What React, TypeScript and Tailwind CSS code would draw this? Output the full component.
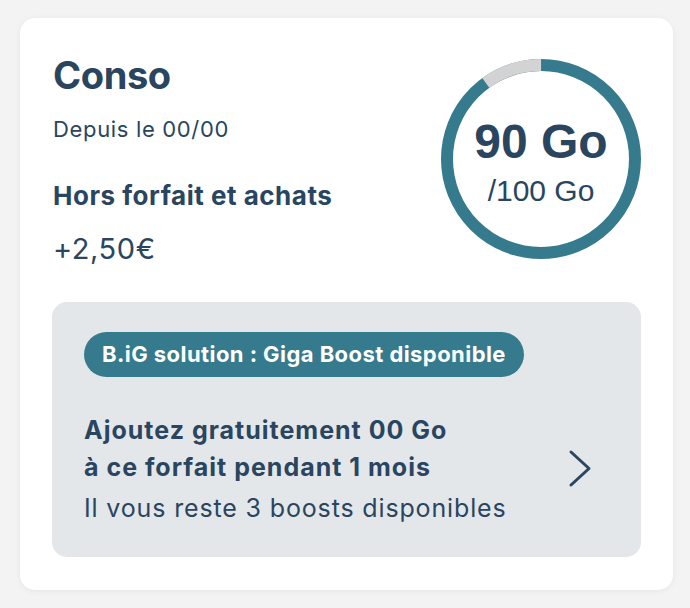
const NAVY = "text-[#2a4560]"

function UsageRing() {
  const r = 94
  const c = 2 * Math.PI * r
  const spent = 0.1 * c

  return (
    <div className="relative mt-[7px] h-[200px] w-[200px] shrink-0">
      <svg width="200" height="200" viewBox="0 0 200 200" className="absolute inset-0">
        <circle cx="100" cy="100" r={r} fill="none" stroke="#367a8e" strokeWidth="12" />
        <circle
          cx="100"
          cy="100"
          r={r}
          fill="none"
          stroke="#d3d3d3"
          strokeWidth="12"
          strokeDasharray={`${spent} ${c}`}
          transform="rotate(-126 100 100)"
        />
      </svg>
      <div
        className={`relative flex flex-col items-center pt-[59px] ${NAVY}`}
        style={{ fontFamily: '"Liberation Sans", Arial, sans-serif' }}>
        <span className="text-[48px] font-bold leading-[48px]">90 Go</span>
        <span className="mt-[10px] text-[30px] leading-[30px]">/100 Go</span>
      </div>
    </div>
  )
}

function Chevron() {
  return (
    <svg width="24" height="39" viewBox="0 0 24 39" className="shrink-0">
      <polyline
        points="3,3 21,19.5 3,36"
        fill="none"
        stroke="#2a4560"
        strokeWidth="3"
        strokeLinecap="round"
        strokeLinejoin="round"
      />
    </svg>
  )
}

export default function App() {
  return (
    <div
      className="min-h-[608px] w-full bg-[#f3f3f3] pl-5 pt-[18px]"
      style={{ fontFamily: "Inter, 'Noto Sans', sans-serif" }}>
      <div className="w-[653px] rounded-[15px] bg-white px-8 pb-[33px] pt-[34px] shadow-[0_1px_6px_rgba(0,0,0,0.06)]">
        {/* conso + anneau */}
        <div className="flex items-start justify-between">
          <div className={`flex flex-col pl-px ${NAVY}`}>
            <h2 className="text-[38px] font-bold leading-[46px] tracking-[-0.01em]">Conso</h2>
            <p className="mt-[17px] text-[22px] leading-[28px] tracking-[0.03em]">Depuis le 00/00</p>
            <h3 className="mt-[37px] text-[26px] font-bold leading-[32px] tracking-[0.02em]">
              Hors forfait et achats
            </h3>
            <p className="mt-5 text-[29px] leading-[34px] tracking-[0.02em]">+2,50€</p>
          </div>
          <UsageRing />
        </div>

        {/* Giga Boost */}
        <div className="mt-9 rounded-[15px] bg-[#e4e7ea] pb-[33px] pl-8 pr-[49px] pt-[30px]">
          <span className="inline-flex h-[45px] items-center rounded-full bg-[#367a8e] px-[18px] text-[22px] font-bold tracking-[0.02em] text-white">
            B.iG solution : Giga Boost disponible
          </span>
          <div className={`mt-[35px] flex items-center justify-between ${NAVY}`}>
            <div>
              <p className="text-[25px] font-bold leading-[37px] tracking-[0.04em]">
                Ajoutez gratuitement 00 Go
                <br />à ce forfait pendant 1 mois
              </p>
              <p className="mt-[6px] text-[25px] leading-[32px] tracking-[0.034em]">
                Il vous reste 3 boosts disponibles
              </p>
            </div>
            <Chevron />
          </div>
        </div>
      </div>
    </div>
  )
}
